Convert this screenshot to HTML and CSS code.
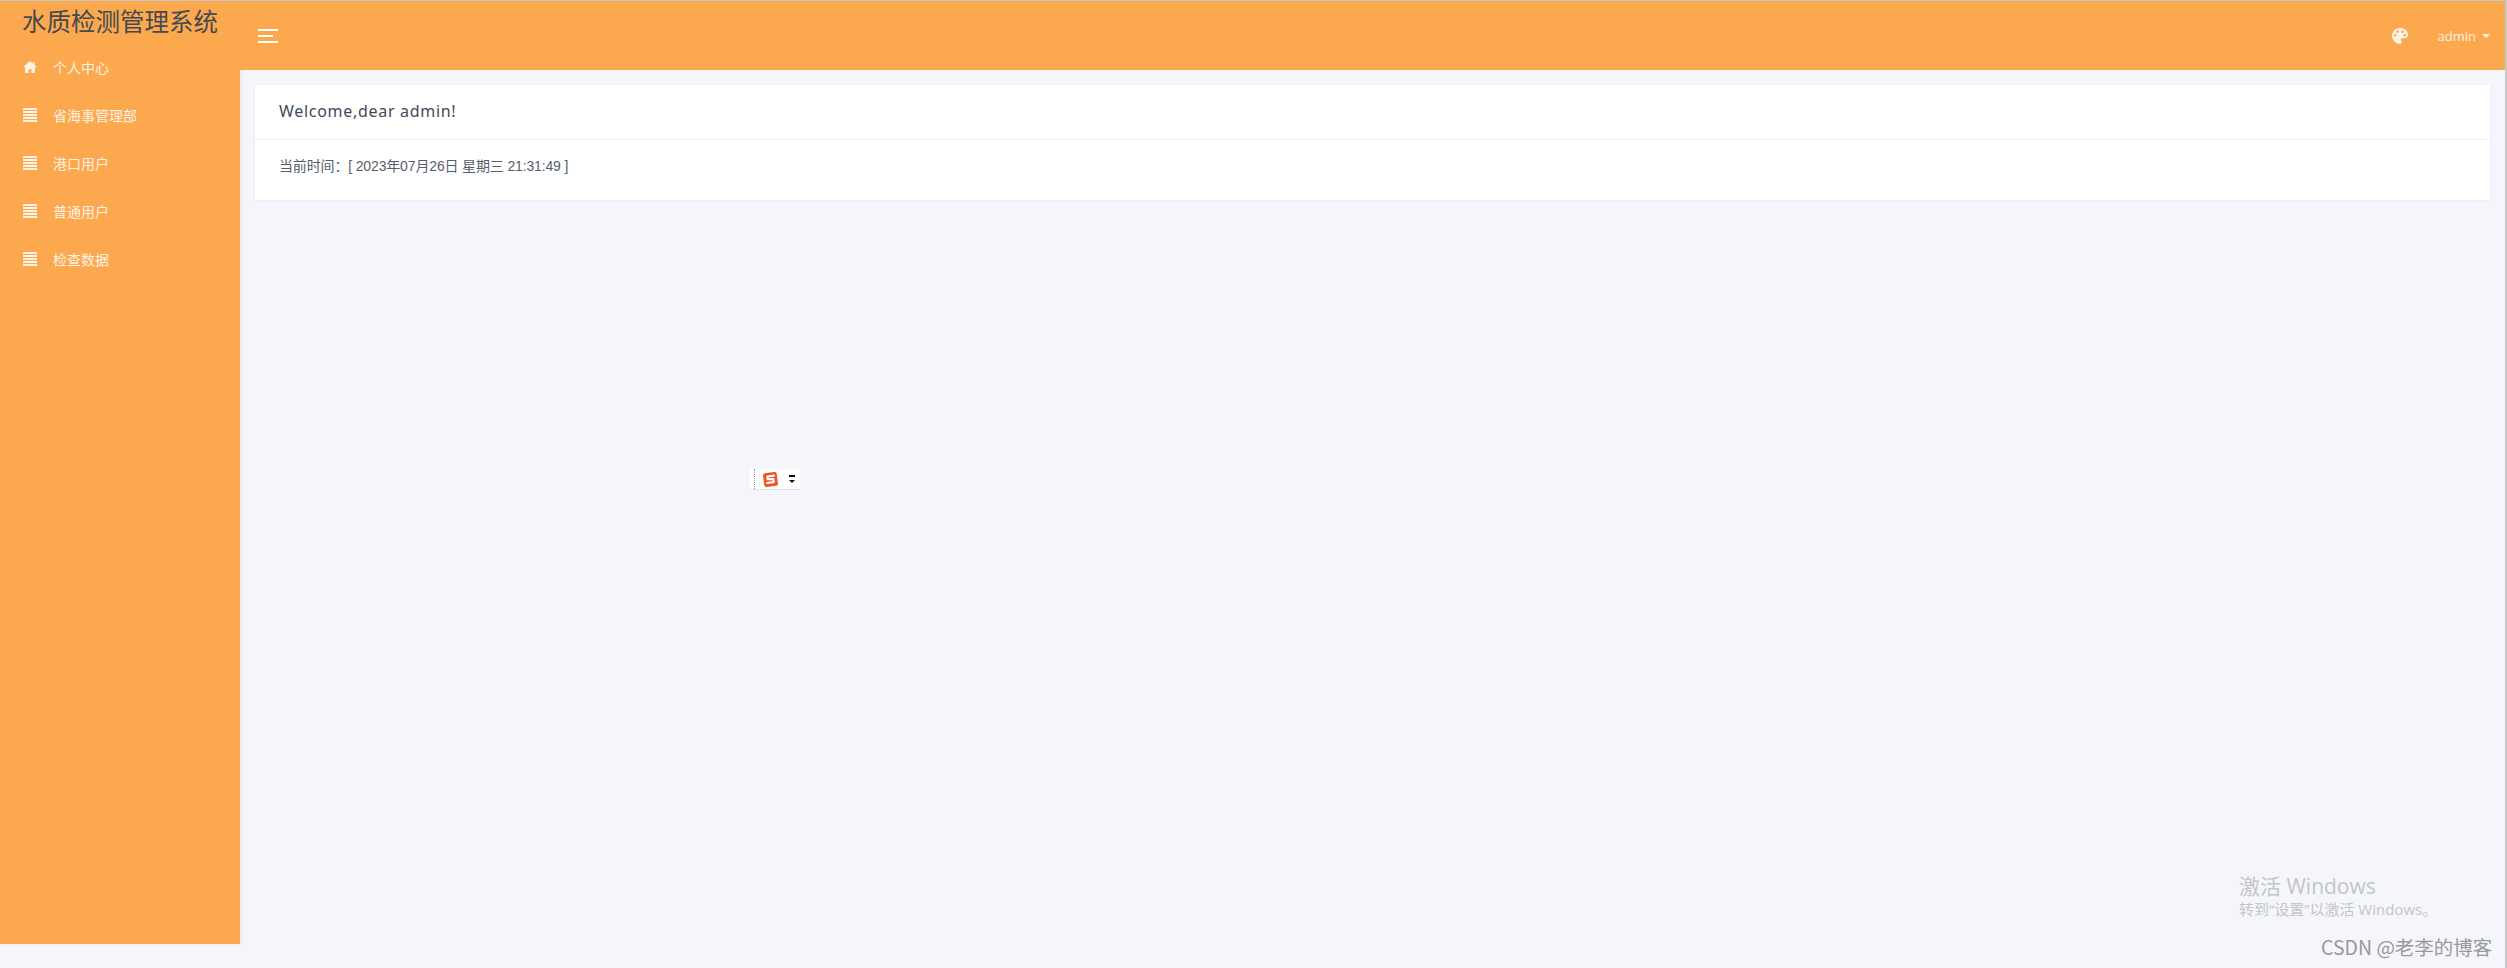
FILE: index.html
```html
<!DOCTYPE html>
<html lang="zh-CN">
<head>
    <meta charset="UTF-8">
    <title>水质检测管理系统</title>
    <link rel="stylesheet" href="styles.css">
</head>
<body>
    <div class="layout">
        <!-- Sidebar -->
        <aside class="sidebar">
            <div class="logo">水质检测管理系统</div>
            <ul class="menu">
                <li>
                    <svg class="menu-icon" viewBox="0 0 14 12"><path d="M7 0 0 6h2v6h3.6V8h2.8v4H12V6h2l-2.4-2V1h-1.8v1.4z"/></svg>
                    个人中心
                </li>
                <li>
                    <svg class="menu-icon" viewBox="0 0 14 14"><path d="M0 0h14v2H0zM0 3h14v2H0zM0 6h14v2H0zM0 9h14v2H0zM0 12h14v2H0z"/></svg>
                    省海事管理部
                </li>
                <li>
                    <svg class="menu-icon" viewBox="0 0 14 14"><path d="M0 0h14v2H0zM0 3h14v2H0zM0 6h14v2H0zM0 9h14v2H0zM0 12h14v2H0z"/></svg>
                    港口用户
                </li>
                <li>
                    <svg class="menu-icon" viewBox="0 0 14 14"><path d="M0 0h14v2H0zM0 3h14v2H0zM0 6h14v2H0zM0 9h14v2H0zM0 12h14v2H0z"/></svg>
                    普通用户
                </li>
                <li>
                    <svg class="menu-icon" viewBox="0 0 14 14"><path d="M0 0h14v2H0zM0 3h14v2H0zM0 6h14v2H0zM0 9h14v2H0zM0 12h14v2H0z"/></svg>
                    检查数据
                </li>
            </ul>
        </aside>

        <div class="main">
            <!-- Top bar -->
            <header class="topbar">
                <div class="hamburger"><span></span><span class="short"></span><span></span></div>
                <div class="topbar-right">
                    <svg class="palette" viewBox="0 0 16 16"><path fill-rule="evenodd" d="M8 0C3.6 0 0 3.4 0 7.8 0 12.200 3.600 16 8 16c1.300 0 1.900-.8 1.900-1.700 0-.5-.2-.9-.5-1.200-.3-.4-.5-.7-.5-1.200 0-1 .8-1.600 1.800-1.600h1.700C14.500 10.300 16 8.900 16 7 16 3 12.400 0 8 0zM3.300 8.600a1.300 1.300 0 1 1 0-2.600 1.300 1.300 0 0 1 0 2.600zM5.600 5a1.300 1.300 0 1 1 0-2.600 1.300 1.300 0 0 1 0 2.600zm4.800 0a1.300 1.300 0 1 1 0-2.600 1.300 1.300 0 0 1 0 2.600zm2.400 3.600a1.300 1.300 0 1 1 0-2.600 1.300 1.300 0 0 1 0 2.600z"/></svg>
                    <span class="user">admin</span>
                    <span class="caret"></span>
                </div>
            </header>

            <main class="content">
                <section class="card">
                    <div class="card-head">Welcome,dear admin!</div>
                    <div class="card-body">当前时间：[ 2023年07月26日 星期三 21:31:49 ]</div>
                </section>
            </main>
        </div>
    </div>

    <!-- Things sitting on top of the page -->
    <div class="ime">
        <span class="ime-grip"></span>
        <svg class="ime-logo" viewBox="0 0 16 16">
            <rect x="1.500" y="1.500" width="13" height="13" rx="2" fill="#f4511e" transform="rotate(-7 8 8)"/>
            <path fill="none" stroke="#fff" stroke-width="2" stroke-linecap="round" stroke-linejoin="round" d="M11.300 4.400 5 5.200 5.300 7.800 10.700 7.500 11 10.500 4.800 11.300"/>
        </svg>
        <span class="ime-arrows"><i class="bar"></i><i class="down"></i></span>
    </div>
    <div class="activate">
        <div class="activate-title">激活 Windows</div>
        <div class="activate-sub">转到“设置”以激活 Windows。</div>
    </div>
    <div class="csdn">CSDN @老李的博客</div>
</body>
</html>
```

FILE: styles.css
```css
* {
    box-sizing: border-box;
}
html, body {
    height: 100%;
}
body {
    margin: 0;
    background-color: #f4f6fb;
    font-family: "Open Sans", "Noto Sans CJK SC", sans-serif;
    color: #3e4a5a;
    overflow: hidden;
    border-top: 1px solid #c8c8c8;
    border-right: 2px solid #c8c8c8;
}
.layout {
    display: flex;
    height: 100%;
}

/* Sidebar */
.sidebar {
    width: 240px;
    height: 943px;
    flex-shrink: 0;
    background-color: #fba84e;
    box-shadow: 1px 0 4px rgba(0, 0, 0, 0.08);
}
.logo {
    height: 42px;
    font-family: "Noto Sans CJK SC", sans-serif;
    font-size: 24.500px;
    line-height: 40px;
    padding-left: 22px;
    white-space: nowrap;
    color: #454a52;
    border-bottom: 1px solid #f9a447;
}
.menu {
    list-style: none;
    margin: 0;
    padding: 0;
}
.menu li {
    display: flex;
    align-items: center;
    height: 48px;
    padding-left: 23px;
    font-family: "Noto Sans CJK SC", sans-serif;
    font-size: 14px;
    color: #fff3e4;
}
.menu-icon {
    width: 14px;
    height: 14px;
    margin-right: 16px;
    fill: #fff3e4;
}

/* Top bar */
.main {
    flex: 1;
    min-width: 0;
}
.topbar {
    display: flex;
    align-items: center;
    justify-content: space-between;
    height: 69px;
    padding: 0 15px 0 18px;
    background-color: #fba84e;
}
.hamburger {
    display: flex;
    flex-direction: column;
    gap: 4px;
    width: 20px;
}
.hamburger span {
    height: 2px;
    background-color: #fff;
}
.hamburger .short {
    width: 15px;
}
.topbar-right {
    display: flex;
    align-items: center;
    color: #fff3e4;
    font-size: 13px;
}
.palette {
    width: 16px;
    height: 16px;
    fill: #fff3e4;
    margin-right: 30px;
}
.caret {
    width: 0;
    height: 0;
    margin-left: 6px;
    border-left: 4px solid transparent;
    border-right: 4px solid transparent;
    border-top: 4px solid #fff3e4;
}

/* Content */
.content {
    padding: 15px 15px 0;
}
.card {
    background-color: #fff;
    box-shadow: 0 1px 4px rgba(0, 0, 0, 0.05);
}
.card-head {
    height: 55px;
    padding-left: 24px;
    font-family: "Noto Sans", "Noto Sans CJK SC", sans-serif;
    font-size: 16px;
    letter-spacing: 0.7px;
    line-height: 53px;
    border-bottom: 1px solid #f2f2f4;
}
.card-body {
    height: 60px;
    padding-left: 24px;
    font-family: "Liberation Sans", "Noto Sans CJK SC", sans-serif;
    font-size: 14px;
    letter-spacing: -0.15px;
    line-height: 53px;
    color: #555e6a;
}

/* Input method toolbar */
.ime {
    position: absolute;
    left: 750px;
    top: 469px;
    width: 50px;
    height: 21px;
    display: flex;
    align-items: center;
    background-color: #fff;
    border-bottom: 1px solid #e2e2e2;
}
.ime-grip {
    width: 1px;
    height: 20px;
    margin-left: 4px;
    border-left: 1px dotted #999;
}
.ime-logo {
    width: 17px;
    height: 17px;
    margin-left: 7px;
}
.ime-arrows {
    display: flex;
    flex-direction: column;
    align-items: center;
    gap: 3px;
    margin-left: 10px;
}
.ime-arrows .bar {
    width: 6px;
    height: 2px;
    background-color: #111;
}
.ime-arrows .down {
    width: 0;
    height: 0;
    border-left: 3px solid transparent;
    border-right: 3px solid transparent;
    border-top: 3px solid #111;
}

/* Overlays in the bottom corner */
.activate {
    position: absolute;
    left: 2239px;
    top: 872px;
    color: #c3c5c9;
    font-family: "Open Sans", "Noto Sans CJK SC", sans-serif;
}
.activate-title {
    font-size: 21px;
    line-height: 28px;
}
.activate-sub {
    font-size: 15px;
    line-height: 18px;
}
.csdn {
    position: absolute;
    left: 2321px;
    top: 934px;
    color: #999;
    font-family: "Noto Sans CJK SC", sans-serif;
    font-size: 19.500px;
    line-height: 26px;
    white-space: nowrap;
}
```
